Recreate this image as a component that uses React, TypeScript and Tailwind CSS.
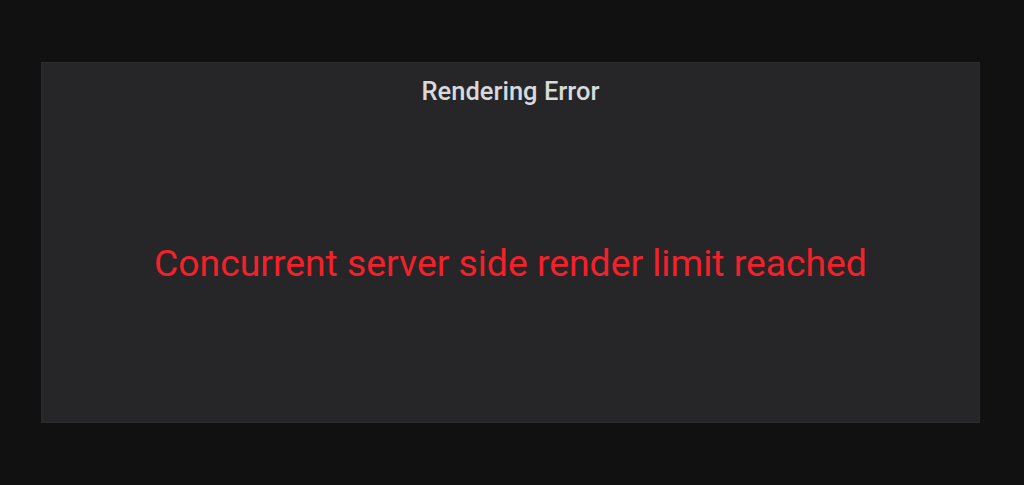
export default function App() {
  return (
    <div className="flex h-[485px] w-[1024px] bg-[#111112] pt-[62px] pl-[41px]" style={{ fontFamily: 'Roboto, sans-serif' }}>
      <div className="flex h-[361px] w-[939px] flex-col border border-[#2c2c2e] bg-[#262628]">
        <div className="flex h-[42px] justify-center pt-[13px]">
          <h2 className="text-[25.5px] leading-[30px] font-medium text-[#d8d9da]">Rendering Error</h2>
        </div>
        <div className="flex flex-1 items-center justify-center">
          <p className="text-[37.3px] text-[#f3212a]">Concurrent server side render limit reached</p>
        </div>
      </div>
    </div>
  );
}
